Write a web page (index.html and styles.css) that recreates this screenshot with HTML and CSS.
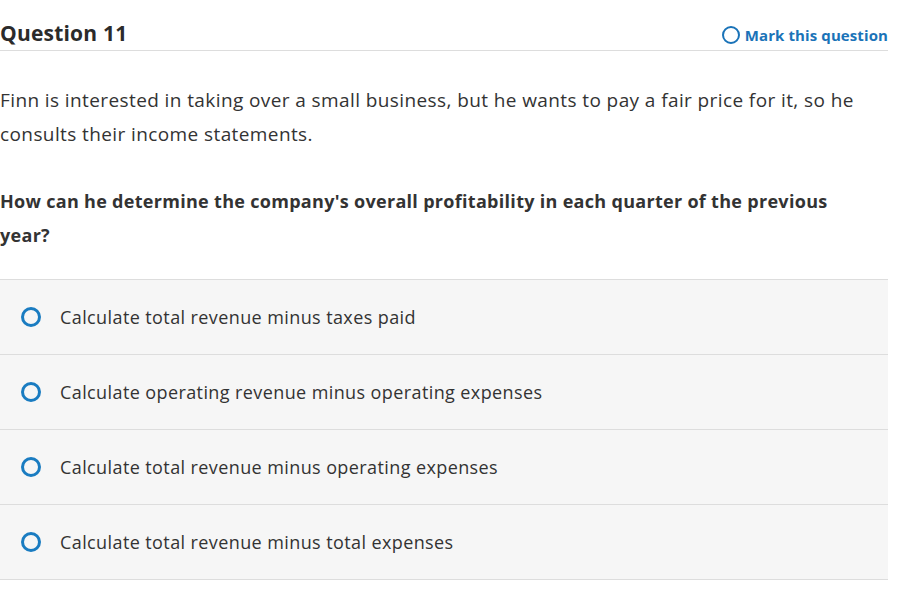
FILE: index.html
```html
<!DOCTYPE html>
<html>
<head>
<meta charset="utf-8">
<link rel="stylesheet" href="styles.css">
</head>
<body>
<div class="page">
  <div class="header">
    <h2 class="title">Question 11</h2>
    <a class="mark"><span class="mark-circle"></span>Mark this question</a>
  </div>
  <p class="prompt">Finn is interested in taking over a small business, but he wants to pay a fair price for it, so he consults their income statements.</p>
  <p class="question">How can he determine the company's overall profitability in each quarter of the previous year?</p>
  <div class="options">
    <div class="option"><span class="radio"></span><span class="label">Calculate total revenue minus taxes paid</span></div>
    <div class="option"><span class="radio"></span><span class="label">Calculate operating revenue minus operating expenses</span></div>
    <div class="option"><span class="radio"></span><span class="label">Calculate total revenue minus operating expenses</span></div>
    <div class="option"><span class="radio"></span><span class="label">Calculate total revenue minus total expenses</span></div>
  </div>
</div>
</body>
</html>
```
FILE: styles.css
```css
html, body { margin: 0; padding: 0; background: #fff; }
body { font-family: "Open Sans", "Liberation Sans", sans-serif; color: #333; }
.page { width: 888px; }
.header {
  display: flex; justify-content: space-between; align-items: center;
  height: 51px; border-bottom: 1px solid #ddd; box-sizing: border-box;
  padding-top: 16px;
}
.title { margin: 0; font-size: 21px; font-weight: 700; color: #2b2b2b; letter-spacing: 0.2px; }
.mark { display: flex; align-items: center; gap: 5px; color: #1a73b8; font-weight: 700; font-size: 15px; letter-spacing: 0.1px; text-decoration: none; padding-top: 4px; }
.mark-circle { width: 14px; height: 14px; border: 2px solid #1a73b8; border-radius: 50%; display: inline-block; }
.prompt { margin: 32px 0 0; max-width: 870px; font-size: 19px; line-height: 34px; letter-spacing: 0.4px; color: #333; }
.question { margin: 33px 0 0; max-width: 870px; font-size: 18px; line-height: 34px; letter-spacing: 0.3px; font-weight: 700; color: #333; }
.options { margin-top: 27px; border-top: 1px solid #ddd; }
.option {
  display: flex; align-items: center; height: 74px; background: #f6f6f6;
  border-bottom: 1px solid #ddd; padding-left: 21px;
}
.radio { width: 14px; height: 14px; border: 3px solid #1a7cc1; border-radius: 50%; flex: none; }
.label { margin-left: 19px; font-size: 18px; letter-spacing: 0.4px; color: #333; }
```
